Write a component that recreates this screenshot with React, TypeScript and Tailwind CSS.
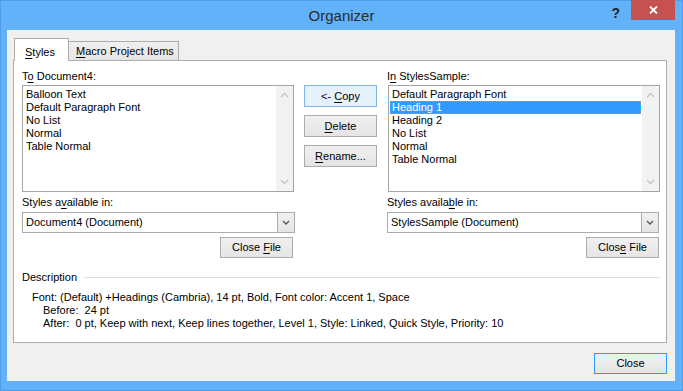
import React from "react";

function U({ children }: { children: React.ReactNode }) {
  return <span className="underline decoration-1 underline-offset-[2px]">{children}</span>;
}

function Btn({ children, className = "" }: { children: React.ReactNode; className?: string }) {
  return (
    <div
      className={`flex items-center justify-center w-[73px] h-[22px] border border-[#acacac] bg-linear-to-b from-[#f0f0f0] to-[#e5e5e5] text-[11px] text-black ${className}`}
    >
      {children}
    </div>
  );
}

function Scroll() {
  return (
    <div className="w-[17px] h-full bg-[#f2f2f2] flex flex-col justify-between items-center py-[6px]">
      <svg width="9" height="6" viewBox="0 0 9 6">
        <path d="M1 5 L4.5 1.5 L8 5" stroke="#c4c4c4" strokeWidth="1.3" fill="none" />
      </svg>
      <svg width="9" height="6" viewBox="0 0 9 6">
        <path d="M1 1 L4.5 4.5 L8 1" stroke="#c4c4c4" strokeWidth="1.3" fill="none" />
      </svg>
    </div>
  );
}

function Combo({ text }: { text: string }) {
  return (
    <div className="flex h-[21px] w-full border border-[#acacac] bg-white">
      <div className="flex-1 flex items-center pl-[3px] text-[11px]">{text}</div>
      <div className="w-[17px] flex items-center justify-center border-l border-[#acacac] bg-linear-to-b from-[#f0f0f0] to-[#e5e5e5]">
        <svg width="8" height="5" viewBox="0 0 8 5">
          <path d="M1 1 L4 4 L7 1" stroke="#555" strokeWidth="1.3" fill="none" />
        </svg>
      </div>
    </div>
  );
}

const leftItems = ["Balloon Text", "Default Paragraph Font", "No List", "Normal", "Table Normal"];
const rightItems = ["Default Paragraph Font", "Heading 1", "Heading 2", "No List", "Normal", "Table Normal"];

export default function App() {
  return (
    <div className="w-[683px] h-[391px] bg-[#62b2f9] border border-[#4f9de6] flex flex-col font-['Liberation_Sans',Arial,sans-serif] text-black">
      {/* title bar */}
      <div className="h-[29px] flex items-start">
        <div className="flex-1" />
        <div className="pt-[5px] text-[15px] leading-[20px] text-[#2b2b2b]">Organizer</div>
        <div className="flex-1 flex justify-end items-start">
          <div className="mt-[5px] mr-[11px] text-[14px] leading-[14px] font-bold text-[#222]">?</div>
          <div className="w-[44px] h-[20px] mr-[7px] -mt-px bg-[#c75050] flex items-center justify-center">
            <svg width="9" height="8" viewBox="0 0 9 8">
              <path d="M1 0.5 L8 7.5 M8 0.5 L1 7.5" stroke="#fff" strokeWidth="1.8" />
            </svg>
          </div>
        </div>
      </div>

      {/* client area */}
      <div className="ml-[6px] mr-[7px] mb-[9px] flex-1 bg-[#f0f0f0] flex flex-col pl-[6px] pr-[8px] pt-[8px] text-[11px]">
        {/* tabs */}
        <div className="flex items-end h-[22px]">
          <div className="ml-px w-[55px] h-[23px] -mb-px relative z-10 bg-white border border-b-0 border-[#acacac] flex items-start pt-[5px] pl-[10px] text-[11px]">
            <span>
              <U>S</U>tyles
            </span>
          </div>
          <div className="w-[110px] h-[19px] border border-l-0 border-b-0 border-[#acacac] bg-linear-to-b from-[#f0f0f0] to-[#e5e5e5] flex items-center pl-[7px]">
            <span>
              <U>M</U>acro Project Items
            </span>
          </div>
        </div>

        {/* panel */}
        <div className="h-[283px] border border-[#acacac] bg-white pt-[9px] pl-[8px] flex flex-col">
          <div className="flex">
            {/* left column */}
            <div className="w-[273px] flex flex-col">
              <div className="h-[13px] leading-[13px]">
                T<U>o</U> Document4:
              </div>
              <div className="mt-[2px] h-[107px] w-[272px] border border-[#a5a5a5] flex">
                <div className="flex-1 pt-[2px] pl-[3px]">
                  {leftItems.map((s) => (
                    <div key={s} className="h-[13px] leading-[13px]">
                      {s}
                    </div>
                  ))}
                </div>
                <Scroll />
              </div>
              <div className="mt-[4px] h-[13px] leading-[13px]">
                Styles a<U>v</U>ailable in:
              </div>
              <div className="mt-[3px]">
                <Combo text="Document4 (Document)" />
              </div>
              <Btn className="mt-[4px] self-end mr-[2px] !h-[21px]">
                <span>
                  Close <U>F</U>ile
                </span>
              </Btn>
            </div>

            {/* middle buttons */}
            <div className="ml-[9px] pt-[15px] flex flex-col gap-[8px]">
              <Btn className="!border-[#7eb4ea] !from-[#e5f1fb] !to-[#e5f1fb]">
                <span>
                  &lt;- <U>C</U>opy
                </span>
              </Btn>
              <Btn>
                <span>
                  <U>D</U>elete
                </span>
              </Btn>
              <Btn>
                <span>
                  <U>R</U>ename...
                </span>
              </Btn>
            </div>

            {/* right column */}
            <div className="ml-[10px] w-[273px] flex flex-col">
              <div className="h-[13px] leading-[13px]">
                I<U>n</U> StylesSample:
              </div>
              <div className="mt-[2px] ml-px h-[107px] w-[272px] border border-[#a5a5a5] flex">
                <div className="flex-1 pt-[2px] pl-px pr-px">
                  {rightItems.map((s) =>
                    s === "Heading 1" ? (
                      <div
                        key={s}
                        className="h-[13px] leading-[11px] bg-[#3399ff] text-white border border-dotted border-[#e08a3c] pl-[1px]"
                      >
                        {s}
                      </div>
                    ) : (
                      <div key={s} className="h-[13px] leading-[13px] pl-[2px]">
                        {s}
                      </div>
                    )
                  )}
                </div>
                <Scroll />
              </div>
              <div className="mt-[4px] h-[13px] leading-[13px]">
                Styles availa<U>b</U>le in:
              </div>
              <div className="mt-[3px] w-[272px]">
                <Combo text="StylesSample (Document)" />
              </div>
              <Btn className="mt-[4px] self-end mr-[1px] !h-[21px]">
                <span>
                  Clos<U>e</U> File
                </span>
              </Btn>
            </div>
          </div>

          {/* description */}
          <div className="mt-[13px] flex items-center h-[13px]">
            <span className="leading-[13px]">Description</span>
            <div className="flex-1 h-px bg-[#dcdcdc] ml-[7px] mr-[6px]" />
          </div>
          <div className="mt-[7px] pl-[10px] leading-[13px] whitespace-pre">
            <div>Font: (Default) +Headings (Cambria), 14 pt, Bold, Font color: Accent 1, Space</div>
            <div className="pl-[11px]">Before:  24 pt</div>
            <div className="pl-[11px]">After:  0 pt, Keep with next, Keep lines together, Level 1, Style: Linked, Quick Style, Priority: 10</div>
          </div>
        </div>

        {/* bottom */}
        <div className="mt-[10px] self-end">
          <div className="flex items-center justify-center w-[73px] h-[21px] border border-[#3399ff] bg-linear-to-b from-[#f0f0f0] to-[#e5e5e5]">
            Close
          </div>
        </div>
      </div>
    </div>
  );
}
